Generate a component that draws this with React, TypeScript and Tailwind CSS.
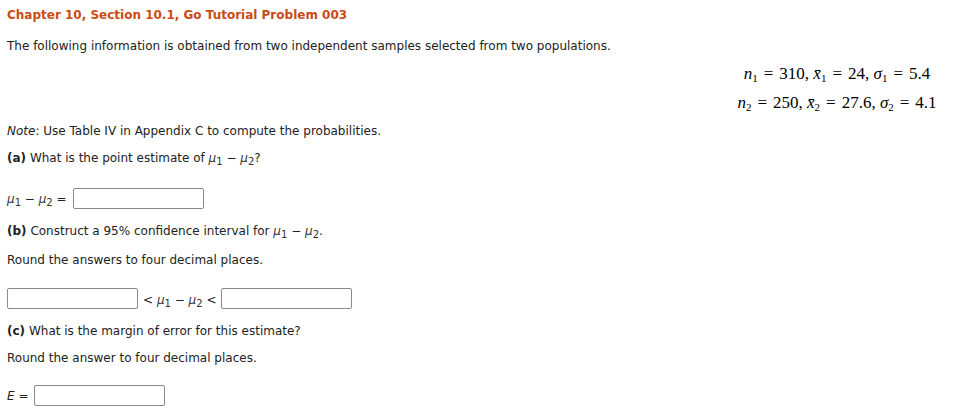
import type { ReactNode } from "react";

const SANS = "font-['DejaVu_Sans',Verdana,sans-serif]";

function Mu({ n }: { n: number }) {
	return (
		<span className="italic text-[#333]">
			μ<span className="relative top-[3px] text-[10px] leading-none not-italic">{n}</span>
		</span>
	);
}

function MuDiff() {
	return (
		<span className="whitespace-nowrap">
			<Mu n={1} /> − <Mu n={2} />
		</span>
	);
}

function Box({ className = "" }: { className?: string }) {
	return (
		<input
			type="text"
			className={`h-[21px] w-[131px] rounded-[2px] border border-[#8a8a8a] bg-white ${className}`}
		/>
	);
}

function Line({ children, className = "" }: { children: ReactNode; className?: string }) {
	return <p className={`leading-[16px] ${className}`}>{children}</p>;
}

function Sub({ children }: { children: ReactNode }) {
	return <span className="relative top-[3px] text-[11px] leading-none">{children}</span>;
}

function Eq() {
	return <span className="mx-[6px]">=</span>;
}

export default function App() {
	return (
		<div className={`${SANS} w-[954px] h-[418px] bg-white text-[12px] text-[#222] px-[7px] pt-[7px]`}>
			<h1 className="text-[12px] leading-[16px] font-bold text-[#c94c14]">
				Chapter 10, Section 10.1, Go Tutorial Problem 003
			</h1>

			<Line className="mt-[15px]">
				The following information is obtained from two independent samples selected from two populations.
			</Line>

			<div className="mt-[5px] flex justify-end">
				<div className="font-['Liberation_Serif',serif] text-[17px] leading-[29px] text-black text-center w-[220px]">
					<div>
						<i>n</i>
						<Sub>1</Sub>
						<Eq />
						310, <i>x̄</i>
						<Sub>1</Sub>
						<Eq />
						24, <i>σ</i>
						<Sub>1</Sub>
						<Eq />
						5.4
					</div>
					<div>
						<i>n</i>
						<Sub>2</Sub>
						<Eq />
						250, <i>x̄</i>
						<Sub>2</Sub>
						<Eq />
						27.6, <i>σ</i>
						<Sub>2</Sub>
						<Eq />
						4.1
					</div>
				</div>
			</div>

			<Line className="mt-[6px]">
				<i>Note</i>: Use Table IV in Appendix C to compute the probabilities.
			</Line>

			<Line className="mt-[11px]">
				<b>(a)</b> What is the point estimate of <MuDiff />?
			</Line>

			<div className="mt-[22px] flex items-center gap-[6px]">
				<span>
					<MuDiff /> =
				</span>
				<Box />
			</div>

			<Line className="mt-[14px]">
				<b>(b)</b> Construct a 95% confidence interval for <MuDiff />.
			</Line>

			<Line className="mt-[13px]">Round the answers to four decimal places.</Line>

			<div className="mt-[19px] flex items-center gap-[5px]">
				<Box />
				<span className="mt-[4px]">
					&lt; <MuDiff /> &lt;
				</span>
				<Box />
			</div>

			<Line className="mt-[14px]">
				<b>(c)</b> What is the margin of error for this estimate?
			</Line>

			<Line className="mt-[11px]">Round the answer to four decimal places.</Line>

			<div className="mt-[19px] flex items-center gap-[6px]">
				<span>
					<i>E</i> =
				</span>
				<Box />
			</div>
		</div>
	);
}
